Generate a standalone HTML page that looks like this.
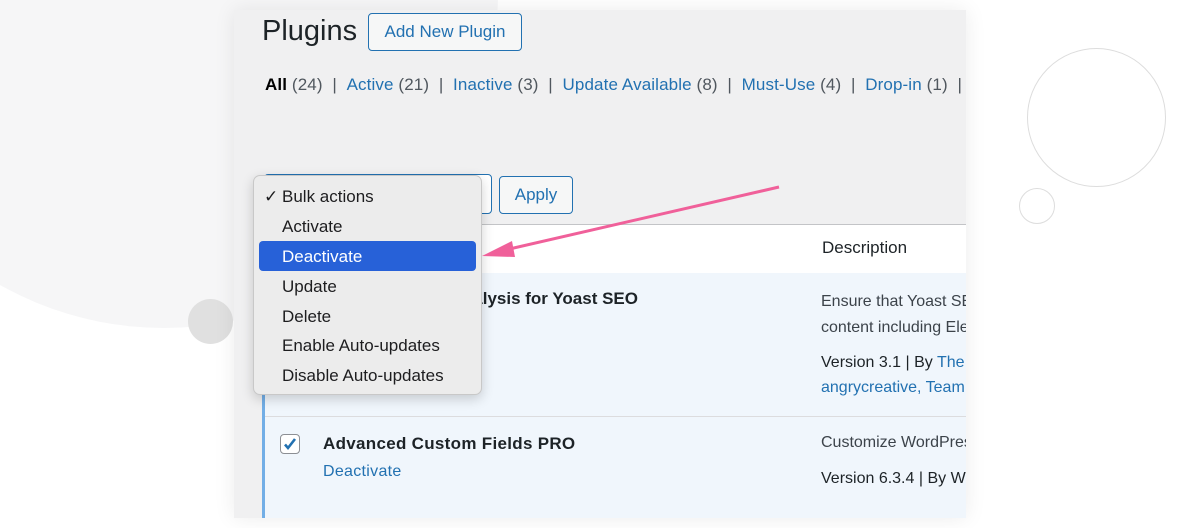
<!DOCTYPE html><html><head><style>
body{margin:0;width:1200px;height:528px;background:#fff;position:relative;overflow:hidden;font-family:"Liberation Sans",sans-serif}
.a{position:absolute}
.panel{left:234px;top:10px;width:732px;height:508px;background:#f0f0f1;overflow:hidden;box-shadow:0 0 20px rgba(0,0,0,.08)}
.blue{color:#2271b1}
.g{color:#50575e}
</style></head><body>
<div class="a" style="left:-170px;top:-340px;width:668px;height:668px;border-radius:50%;background:#f6f6f7"></div>
<div class="a" style="left:188px;top:299px;width:45px;height:45px;border-radius:50%;background:#e0e0e0"></div>
<div class="a" style="left:1027px;top:48px;width:139px;height:139px;border-radius:50%;border:1px solid #ddd;box-sizing:border-box"></div>
<div class="a" style="left:1019px;top:188px;width:36px;height:36px;border-radius:50%;border:1px solid #ddd;box-sizing:border-box"></div>
<div class="a panel">
 <div class="a" style="left:28px;top:5px;font-size:29px;color:#1d2327">Plugins</div>
 <div class="a" style="left:134px;top:3px;width:154px;height:38px;border:1px solid #2271b1;border-radius:4px;box-sizing:border-box;background:#f6f7f7;color:#2271b1;font-size:17px;line-height:36px;text-align:center">Add New Plugin</div>
 <div class="a" style="left:31px;top:65px;font-size:17px;white-space:nowrap;color:#50575e;letter-spacing:0.12px"><b style="color:#000">All</b> (24) &nbsp;| &nbsp;<span class="blue">Active</span> (21) &nbsp;| &nbsp;<span class="blue">Inactive</span> (3) &nbsp;| &nbsp;<span class="blue">Update Available</span> (8) &nbsp;| &nbsp;<span class="blue">Must-Use</span> (4) &nbsp;| &nbsp;<span class="blue">Drop-in</span> (1) &nbsp;|</div>
 <div class="a" style="left:30px;top:164px;width:228px;height:40px;border:1px solid #2271b1;border-radius:4px;box-sizing:border-box;background:#fff"></div>
 <div class="a" style="left:265px;top:166px;width:74px;height:38px;border:1px solid #2271b1;border-radius:4px;box-sizing:border-box;color:#2271b1;font-size:17px;line-height:36px;text-align:center;background:#f6f7f7">Apply</div>
 <div class="a" style="left:28px;top:214px;width:710px;height:48px;background:#fff;border-top:1px solid #c3c4c7;border-bottom:1px solid #c3c4c7"></div>
 <div class="a" style="left:588px;top:228px;font-size:17px;color:#1d2327">Description</div>
 <div class="a" style="left:28px;top:263px;width:710px;height:143px;background:#f0f6fc;border-bottom:1px solid #dcdcde"></div>
 <div class="a" style="left:28px;top:407px;width:710px;height:101px;background:#f0f6fc;border-bottom:1px solid #dcdcde"></div>
 <div class="a" style="left:28px;top:263px;width:3px;height:245px;background:#72aee6"></div>
 <div class="a" style="left:0;width:404px;text-align:right;top:279px;font-size:17px;font-weight:bold;color:#1d2327;white-space:nowrap">Readability Analysis for Yoast SEO</div>
 <div class="a" style="left:587px;top:279px;font-size:16px;line-height:26px;color:#3c434a;white-space:nowrap">Ensure that Yoast SEO<br>content including Elementor</div>
 <div class="a" style="left:587px;top:340px;font-size:16px;line-height:25px;color:#1d2327;white-space:nowrap">Version 3.1 | By <span class="blue">The</span><br><span class="blue">angrycreative, Team</span></div>
 <div class="a" style="left:46px;top:424px;width:20px;height:20px;border:1px solid #8c8f94;border-radius:4px;background:#fff;box-sizing:border-box"><svg width="18" height="18" viewBox="0 0 18 18" style="position:absolute;left:0;top:0"><path d="M4 9.5l3 3.5 7-9" stroke="#2271b1" stroke-width="2.6" fill="none"/></svg></div>
 <div class="a" style="left:89px;top:424px;font-size:17px;font-weight:bold;color:#1d2327;letter-spacing:0.3px">Advanced Custom Fields PRO</div>
 <div class="a blue" style="left:89px;top:453px;font-size:16px;letter-spacing:0.3px">Deactivate</div>
 <div class="a" style="left:587px;top:424px;font-size:16px;color:#3c434a;white-space:nowrap">Customize WordPress</div>
 <div class="a" style="left:587px;top:460px;font-size:16px;color:#1d2327;white-space:nowrap">Version 6.3.4 | By W</div>
</div>
<div class="a" style="left:253px;top:175px;width:229px;height:220px;background:#ececec;border:1px solid #c8c8c8;border-radius:7px;box-sizing:border-box;box-shadow:0 4px 12px rgba(0,0,0,.18);font-size:17px;color:#1d1d1f">
 <div class="a" style="left:10px;top:11px">✓</div>
 <div class="a" style="left:28px;top:11px">Bulk actions</div>
 <div class="a" style="left:28px;top:41px">Activate</div>
 <div class="a" style="left:5px;top:65px;width:217px;height:30px;background:#2761d8;border-radius:4px"></div>
 <div class="a" style="left:28px;top:71px;color:#fff">Deactivate</div>
 <div class="a" style="left:28px;top:101px">Update</div>
 <div class="a" style="left:28px;top:131px">Delete</div>
 <div class="a" style="left:28px;top:160px">Enable Auto-updates</div>
 <div class="a" style="left:28px;top:190px">Disable Auto-updates</div>
</div>
<svg class="a" style="left:0;top:0" width="1200" height="528"><line x1="779" y1="187" x2="505" y2="250" stroke="#f0609a" stroke-width="3"/><path d="M482 256L512 241L515 257Z" fill="#f0609a"/></svg>
</body></html>
